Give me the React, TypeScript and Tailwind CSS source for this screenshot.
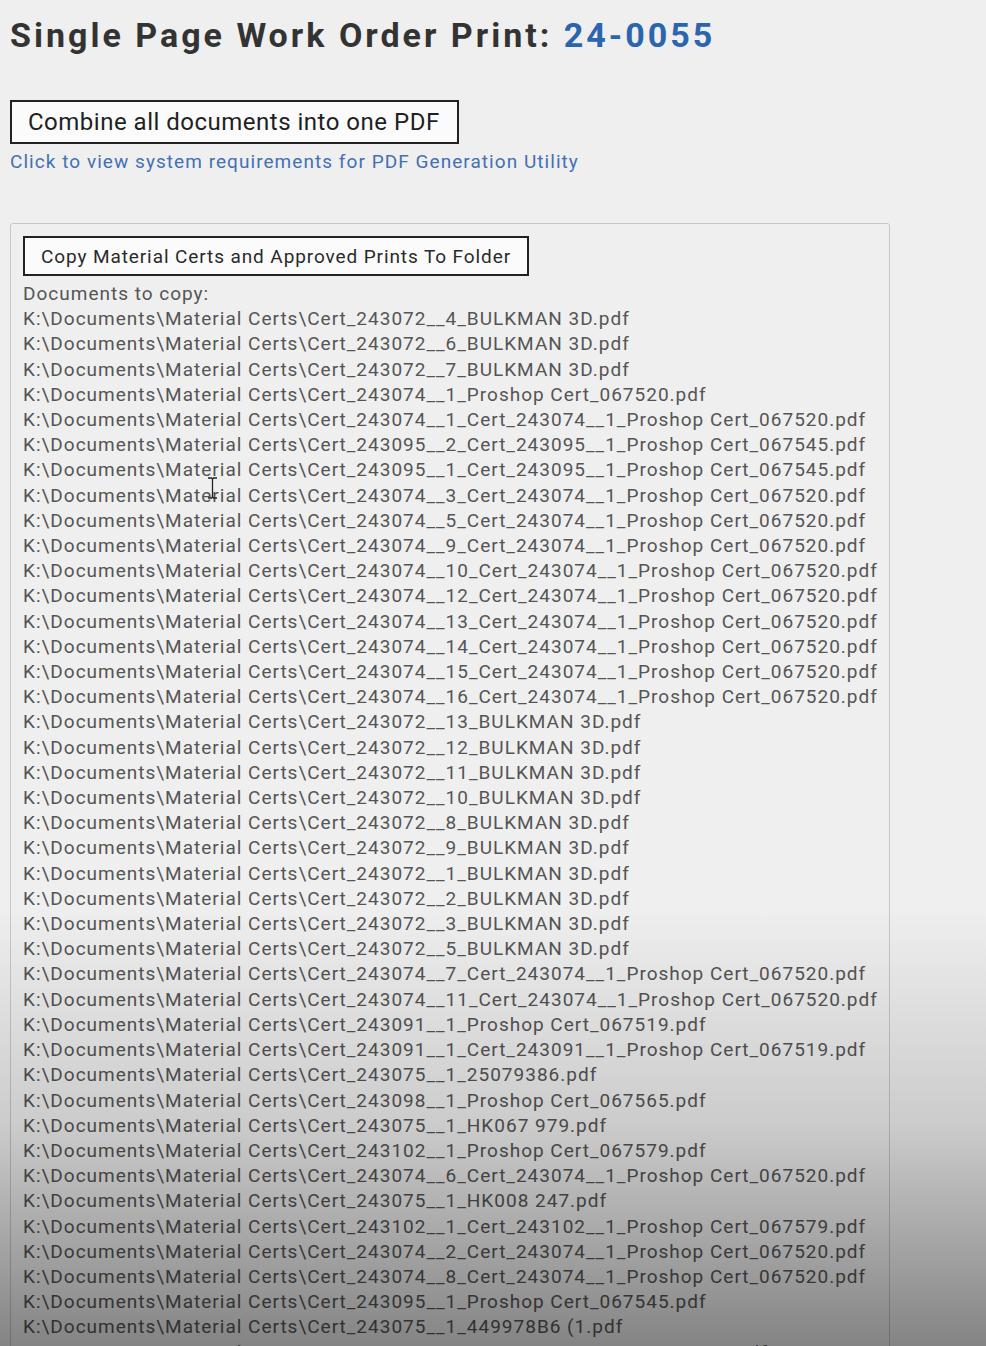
import React from "react";

const files: string[] = [
  "K:\\Documents\\Material Certs\\Cert_243072__4_BULKMAN 3D.pdf",
  "K:\\Documents\\Material Certs\\Cert_243072__6_BULKMAN 3D.pdf",
  "K:\\Documents\\Material Certs\\Cert_243072__7_BULKMAN 3D.pdf",
  "K:\\Documents\\Material Certs\\Cert_243074__1_Proshop Cert_067520.pdf",
  "K:\\Documents\\Material Certs\\Cert_243074__1_Cert_243074__1_Proshop Cert_067520.pdf",
  "K:\\Documents\\Material Certs\\Cert_243095__2_Cert_243095__1_Proshop Cert_067545.pdf",
  "K:\\Documents\\Material Certs\\Cert_243095__1_Cert_243095__1_Proshop Cert_067545.pdf",
  "K:\\Documents\\Material Certs\\Cert_243074__3_Cert_243074__1_Proshop Cert_067520.pdf",
  "K:\\Documents\\Material Certs\\Cert_243074__5_Cert_243074__1_Proshop Cert_067520.pdf",
  "K:\\Documents\\Material Certs\\Cert_243074__9_Cert_243074__1_Proshop Cert_067520.pdf",
  "K:\\Documents\\Material Certs\\Cert_243074__10_Cert_243074__1_Proshop Cert_067520.pdf",
  "K:\\Documents\\Material Certs\\Cert_243074__12_Cert_243074__1_Proshop Cert_067520.pdf",
  "K:\\Documents\\Material Certs\\Cert_243074__13_Cert_243074__1_Proshop Cert_067520.pdf",
  "K:\\Documents\\Material Certs\\Cert_243074__14_Cert_243074__1_Proshop Cert_067520.pdf",
  "K:\\Documents\\Material Certs\\Cert_243074__15_Cert_243074__1_Proshop Cert_067520.pdf",
  "K:\\Documents\\Material Certs\\Cert_243074__16_Cert_243074__1_Proshop Cert_067520.pdf",
  "K:\\Documents\\Material Certs\\Cert_243072__13_BULKMAN 3D.pdf",
  "K:\\Documents\\Material Certs\\Cert_243072__12_BULKMAN 3D.pdf",
  "K:\\Documents\\Material Certs\\Cert_243072__11_BULKMAN 3D.pdf",
  "K:\\Documents\\Material Certs\\Cert_243072__10_BULKMAN 3D.pdf",
  "K:\\Documents\\Material Certs\\Cert_243072__8_BULKMAN 3D.pdf",
  "K:\\Documents\\Material Certs\\Cert_243072__9_BULKMAN 3D.pdf",
  "K:\\Documents\\Material Certs\\Cert_243072__1_BULKMAN 3D.pdf",
  "K:\\Documents\\Material Certs\\Cert_243072__2_BULKMAN 3D.pdf",
  "K:\\Documents\\Material Certs\\Cert_243072__3_BULKMAN 3D.pdf",
  "K:\\Documents\\Material Certs\\Cert_243072__5_BULKMAN 3D.pdf",
  "K:\\Documents\\Material Certs\\Cert_243074__7_Cert_243074__1_Proshop Cert_067520.pdf",
  "K:\\Documents\\Material Certs\\Cert_243074__11_Cert_243074__1_Proshop Cert_067520.pdf",
  "K:\\Documents\\Material Certs\\Cert_243091__1_Proshop Cert_067519.pdf",
  "K:\\Documents\\Material Certs\\Cert_243091__1_Cert_243091__1_Proshop Cert_067519.pdf",
  "K:\\Documents\\Material Certs\\Cert_243075__1_25079386.pdf",
  "K:\\Documents\\Material Certs\\Cert_243098__1_Proshop Cert_067565.pdf",
  "K:\\Documents\\Material Certs\\Cert_243075__1_HK067 979.pdf",
  "K:\\Documents\\Material Certs\\Cert_243102__1_Proshop Cert_067579.pdf",
  "K:\\Documents\\Material Certs\\Cert_243074__6_Cert_243074__1_Proshop Cert_067520.pdf",
  "K:\\Documents\\Material Certs\\Cert_243075__1_HK008 247.pdf",
  "K:\\Documents\\Material Certs\\Cert_243102__1_Cert_243102__1_Proshop Cert_067579.pdf",
  "K:\\Documents\\Material Certs\\Cert_243074__2_Cert_243074__1_Proshop Cert_067520.pdf",
  "K:\\Documents\\Material Certs\\Cert_243074__8_Cert_243074__1_Proshop Cert_067520.pdf",
  "K:\\Documents\\Material Certs\\Cert_243095__1_Proshop Cert_067545.pdf",
  "K:\\Documents\\Material Certs\\Cert_243075__1_449978B6 (1.pdf",
  "K:\\Documents\\Material Certs\\Cert_243097__1_B.000005240005300414450.pdf",
];

export default function App() {
  return (
    <div
      className="relative h-[1346px] w-[986px] overflow-hidden bg-[#efefef] pl-[10px]"
      style={{ fontFamily: "Roboto, 'Liberation Sans', sans-serif" }}
    >
      <h1 className="pt-[13px] text-[34px] font-bold leading-[44px] tracking-[3px] text-[#333333]">
        Single Page Work Order Print: <span className="text-[#2b65ad]">24-0055</span>
      </h1>

      <button className="mt-[43px] block h-[44px] w-[449px] border-2 border-[#222222] bg-[#fbfbfb] pl-[16px] text-left text-[24px] leading-none tracking-[0.5px] text-[#1f1f1f]">
        Combine all documents into one PDF
      </button>
      <div className="mt-[6px] text-[19px] leading-[24px] tracking-[1.05px] text-[#4470b3]">
        Click to view system requirements for PDF Generation Utility
      </div>

      <div className="mt-[49px] w-[880px] rounded-[3px] border border-[#c6c6c6] bg-[#efefef] px-[12px] pt-[12px]">
        <button className="block h-[40px] w-[506px] border-2 border-[#222222] bg-[#fbfbfb] pl-[16px] text-left text-[19px] leading-none tracking-[0.9px] text-[#2a2a2a]">
          Copy Material Certs and Approved Prints To Folder
        </button>
        <div className="mt-[5px] text-[19px] leading-[25.2px] tracking-[1px] text-[#555555]">
          <div>Documents to copy:</div>
          {files.map((f, i) => (
            <div key={i} className="whitespace-nowrap">
              {f}
            </div>
          ))}
        </div>
      </div>

      {/* text cursor */}
      <svg
        className="pointer-events-none absolute left-[207px] top-[477px]"
        width="11"
        height="22"
        viewBox="0 0 11 22"
      >
        <path d="M1 1h3.5l1 1 1-1H10M5.5 2v18M1 21h3.5l1-1 1 1H10" stroke="#222" strokeWidth="1.3" fill="none" />
      </svg>

      {/* video overlay darkening */}
      <div className="pointer-events-none absolute inset-x-0 bottom-0 h-[440px] bg-gradient-to-b from-transparent via-black/15 to-black/45" />
    </div>
  );
}
